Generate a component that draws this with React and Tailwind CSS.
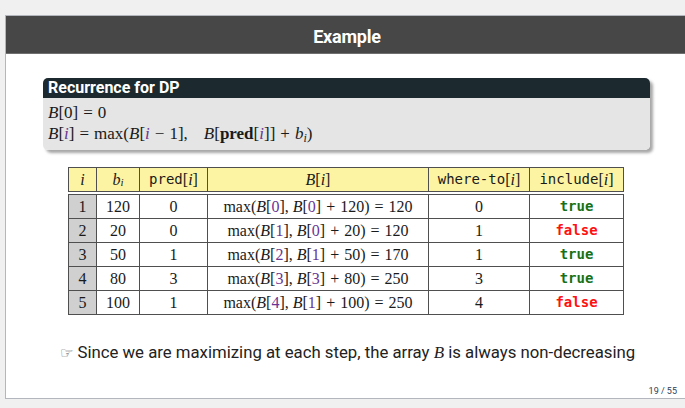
const serif = "font-['Liberation_Serif',serif]";
const mono = "font-['DejaVu_Sans_Mono',monospace]";

const rows = [
  { i: 1, b: 120, pred: 0, a: 0, p: 0, c: 120, d: 120, w: 0, inc: true },
  { i: 2, b: 20, pred: 0, a: 1, p: 0, c: 20, d: 120, w: 1, inc: false },
  { i: 3, b: 50, pred: 1, a: 2, p: 1, c: 50, d: 170, w: 1, inc: true },
  { i: 4, b: 80, pred: 3, a: 3, p: 3, c: 80, d: 250, w: 3, inc: true },
  { i: 5, b: 100, pred: 1, a: 4, p: 1, c: 100, d: 250, w: 4, inc: false },
];

function Idx({ children }) {
  return <span className="text-[#6a3592]">{children}</span>;
}

function Op({ children }) {
  return <span className="mx-[5px]">{children}</span>;
}

function Cell({ children, className = "" }) {
  return (
    <div className={`flex items-center justify-center ${className}`}>
      {children}
    </div>
  );
}

const cols = "grid grid-cols-[27px_42px_67px_220px_100px_93px] auto-rows-[23px] gap-px p-px bg-[#4f4f4f] w-fit";

function App() {
  return (
    <div className="w-[685px] h-[408px] overflow-hidden bg-[#f0f0f0] pt-[15px]">
      <div className="ml-[5px] w-[684px] h-[384px] bg-white border border-[#b3b7bd] flex flex-col">
        <div className="h-[38px] bg-[#474747] border-b border-[#6f6f6f] flex items-center justify-center pt-[4px]">
          <span className="text-white font-bold text-[18px] font-['Roboto',sans-serif] tracking-[-0.2px]">
            Example
          </span>
        </div>

        <div className="ml-[37px] mt-[24px] w-[607px] rounded-[5px] shadow-[3px_3px_3px_rgba(0,0,0,0.35)]">
          <div className="h-[20px] bg-[#1c2a2f] rounded-t-[5px] px-[5px] flex items-center">
            <span className="text-white font-bold text-[16px] font-['Roboto',sans-serif] leading-none">
              Recurrence for DP
            </span>
          </div>
          <div className={`h-[52px] bg-[#e4e5e4] rounded-b-[5px] px-[5px] pt-[4px] text-[17px] leading-[21px] text-[#1a1a1a] ${serif}`}>
            <div>
              <i>B</i>[0]<Op>=</Op>0
            </div>
            <div>
              <i>B</i>[<i className="text-[#6a3592]">i</i>]<Op>=</Op>max(<i>B</i>[<i className="text-[#6a3592]">i</i>
              <Op>−</Op>1],
              <span className="ml-[16px]">
                <i>B</i>[<b>pred</b>[<i className="text-[#6a3592]">i</i>]]<Op>+</Op><i>b</i>
                <sub className="text-[12px]"><i>i</i></sub>)
              </span>
            </div>
          </div>
        </div>

        <div className={`ml-[62px] mt-[17px] text-[16px] text-[#1a1a1a] ${serif}`}>
          <div className={cols}>
            <Cell className="bg-[#fcf4a3]"><i>i</i></Cell>
            <Cell className="bg-[#fcf4a3]"><i>b</i><sub className="text-[11px]"><i>i</i></sub></Cell>
            <Cell className="bg-[#fcf4a3]"><span className={`${mono} text-[14px]`}>pred</span>[<i>i</i>]</Cell>
            <Cell className="bg-[#fcf4a3]"><i>B</i>[<i>i</i>]</Cell>
            <Cell className="bg-[#fcf4a3]"><span className={`${mono} text-[14px]`}>where-to</span>[<i>i</i>]</Cell>
            <Cell className="bg-[#fcf4a3]"><span className={`${mono} text-[14px]`}>include</span>[<i>i</i>]</Cell>
          </div>
          <div className={`${cols} mt-[2px]`}>
            {rows.map((r) => (
              <>
                <Cell key={`i${r.i}`} className="bg-[#d0d0d0]">{r.i}</Cell>
                <Cell className="bg-white">{r.b}</Cell>
                <Cell className="bg-white">{r.pred}</Cell>
                <Cell className="bg-white">
                  max(<i>B</i>[<Idx>{r.a}</Idx>],<span className="ml-[4px]"><i>B</i>[<Idx>{r.p}</Idx>]</span>
                  <Op>+</Op>{r.c})<Op>=</Op>{r.d}
                </Cell>
                <Cell className="bg-white">{r.w}</Cell>
                <Cell className="bg-white">
                  <span className={`${mono} font-bold text-[14px] ${r.inc ? "text-[#177217]" : "text-[#ff1111]"}`}>
                    {r.inc ? "true" : "false"}
                  </span>
                </Cell>
              </>
            ))}
          </div>
        </div>

        <div className="ml-[54px] mt-[25px] flex items-center text-[16.75px] text-[#222] font-['Roboto',sans-serif]">
          <span className="text-[15px] text-[#555] font-['DejaVu_Sans',sans-serif] mr-[4px]">☞</span>
          <span>
            Since we are maximizing at each step, the array <i className={`${serif} text-[17px]`}>B</i> is always non-decreasing
          </span>
        </div>

        <div className="mt-auto pr-[11px] flex justify-end">
          <span className="text-[9px] text-[#2d3c52] font-['Roboto',sans-serif]">19 / 55</span>
        </div>
      </div>
    </div>
  );
}

export default App;
